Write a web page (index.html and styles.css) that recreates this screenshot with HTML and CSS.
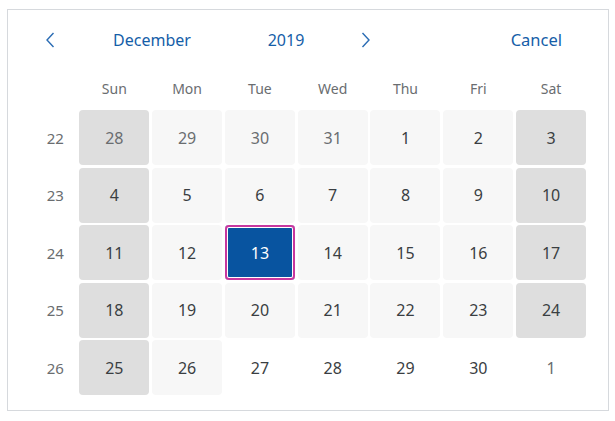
FILE: index.html
```html
<!DOCTYPE html>
<html lang="en">
<head>
<meta charset="utf-8">
<title>Calendar</title>
<link rel="stylesheet" href="styles.css">
</head>
<body>
<div class="panel">
  <div class="header">
    <button class="nav prev" aria-label="Previous">
      <svg width="10" height="16" viewBox="0 0 10 16"><polyline points="8.5,1 2,8 8.5,15" fill="none" stroke="#2a6cb4" stroke-width="1.4"/></svg>
    </button>
    <button class="hbtn month">December</button>
    <button class="hbtn year">2019</button>
    <button class="nav next" aria-label="Next">
      <svg width="10" height="16" viewBox="0 0 10 16"><polyline points="1.5,1 8,8 1.5,15" fill="none" stroke="#2a6cb4" stroke-width="1.4"/></svg>
    </button>
    <button class="hbtn cancel">Cancel</button>
  </div>
  <div class="grid">
    <div class="wk"></div>
    <div class="dn">Sun</div><div class="dn">Mon</div><div class="dn">Tue</div><div class="dn">Wed</div><div class="dn">Thu</div><div class="dn">Fri</div><div class="dn">Sat</div>

    <div class="wk num">22</div>
    <div class="day we other">28</div><div class="day other">29</div><div class="day other">30</div><div class="day other">31</div><div class="day">1</div><div class="day">2</div><div class="day we">3</div>

    <div class="wk num">23</div>
    <div class="day we">4</div><div class="day">5</div><div class="day">6</div><div class="day">7</div><div class="day">8</div><div class="day">9</div><div class="day we">10</div>

    <div class="wk num">24</div>
    <div class="day we">11</div><div class="day">12</div><div class="day sel">13</div><div class="day">14</div><div class="day">15</div><div class="day">16</div><div class="day we">17</div>

    <div class="wk num">25</div>
    <div class="day we">18</div><div class="day">19</div><div class="day">20</div><div class="day">21</div><div class="day">22</div><div class="day">23</div><div class="day we">24</div>

    <div class="wk num">26</div>
    <div class="day we">25</div><div class="day">26</div><div class="day plain">27</div><div class="day plain">28</div><div class="day plain">29</div><div class="day plain">30</div><div class="day plain other">1</div>
  </div>
</div>
</body>
</html>
```

FILE: styles.css
```css
html, body {
  margin: 0;
  padding: 0;
  background: #ffffff;
}
body {
  font-family: "Noto Sans", "Liberation Sans", sans-serif;
  color: #32363a;
}
.panel {
  margin: 9px 0 0 7px;
  width: 600px;
  height: 400px;
  border: 1px solid #d6d9dd;
  box-sizing: content-box;
}
.header {
  display: flex;
  align-items: center;
  height: 60px;
  padding: 0 46px 0 32px;
}
button {
  font-family: inherit;
  background: none;
  border: none;
  padding: 0;
  margin: 0;
  color: #155ea8;
  font-size: 16px;
  line-height: 20px;
}
.nav {
  width: 20px;
  height: 20px;
  display: flex;
  align-items: center;
  justify-content: center;
}
.month {
  width: 100px;
  margin-left: 42px;
}
.year {
  width: 60px;
  margin-left: 54px;
}
.next {
  margin-left: 40px;
}
.cancel {
  margin-left: auto;
  font-size: 16.5px;
}
.grid {
  display: grid;
  grid-template-columns: 42.5px repeat(7, 70px);
  grid-template-rows: 37.5px repeat(5, 55px);
  column-gap: 2.8px;
  row-gap: 2.5px;
  padding-left: 26px;
}
.dn {
  display: flex;
  align-items: center;
  justify-content: center;
  font-size: 14px;
  color: #6a6d70;
}
.wk {
  display: flex;
  align-items: center;
  justify-content: center;
  font-size: 15px;
  color: #6a6d70;
}
.day {
  display: flex;
  align-items: center;
  justify-content: center;
  font-size: 16px;
  background: #f7f7f7;
  border-radius: 4px;
  color: #3a3e42;
}
.day.we {
  background: #dedede;
}
.day.other {
  color: #6a6d70;
}
.day.plain {
  background: transparent;
}
.day.sel {
  background: #0854a0;
  color: #ffffff;
  box-shadow: inset 0 0 0 2px #c7379f, inset 0 0 0 3px #ffffff;
}
```
